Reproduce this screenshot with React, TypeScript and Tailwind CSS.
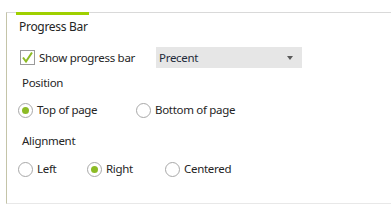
import React, { useState } from "react";

function Radio({ checked, label, onClick }: { checked: boolean; label: string; onClick: () => void }) {
  return (
    <button onClick={onClick} className="flex items-center gap-[4px] text-left">
      <span className="flex h-[15px] w-[15px] items-center justify-center rounded-full border border-[#a8a8a8] bg-white">
        {checked ? <span className="h-[7px] w-[7px] rounded-full bg-[#8cbb25]" /> : null}
      </span>
      <span>{label}</span>
    </button>
  );
}

export default function App() {
  const [show, setShow] = useState(true);
  const [position, setPosition] = useState("top");
  const [align, setAlign] = useState("right");

  return (
    <div
      className="h-[214px] w-[391px] bg-white pt-[12px] pl-[6px] text-[11.5px] leading-[16px] tracking-[-0.3px] text-[#252525]"
      style={{ fontFamily: '"Segoe UI", "Noto Sans", sans-serif' }}
    >
      <div className="relative h-[192px] border-t border-l border-b border-t-[#d9d9d9] border-l-[#c4c4a8] border-b-[#e8e8e8]">
        <div className="absolute left-[9px] top-[-1px] h-[3px] w-[73px] bg-[#9fd000]" />
        <div className="pl-[12px] pt-[6px] text-[12px]">Progress Bar</div>

        <div className="mt-[12px] flex items-center pl-[13px]">
          <button onClick={() => setShow(!show)} className="flex w-[136px] items-center gap-[4px]">
            <span className="flex h-[15px] w-[15px] items-center justify-center border border-[#9a9a9a] bg-white">
              {show ? (
                <svg width="13" height="13" viewBox="0 0 13 13">
                  <path d="M2 6.5 L5 10.5 L11 1.5" fill="none" stroke="#8cbb25" strokeWidth="2" />
                </svg>
              ) : null}
            </span>
            <span>Show progress bar</span>
          </button>
          <div className="flex h-[21px] w-[146px] items-center justify-between bg-[#e6e6e6] pl-[3px] pr-[9px] text-[#1e2a3a]">
            <span>Precent</span>
            <svg width="6" height="4" viewBox="0 0 6 4">
              <path d="M0 0 H6 L3 4 Z" fill="#5a5a5a" />
            </svg>
          </div>
        </div>

        <div className="mt-[7px] pl-[15px]">Position</div>
        <div className="mt-[11px] flex items-center pl-[11px]">
          <div className="w-[118px]">
            <Radio checked={position === "top"} label="Top of page" onClick={() => setPosition("top")} />
          </div>
          <Radio checked={position === "bottom"} label="Bottom of page" onClick={() => setPosition("bottom")} />
        </div>

        <div className="mt-[15px] pl-[15px]">Alignment</div>
        <div className="mt-[12px] flex items-center pl-[11px]">
          <div className="w-[69px]">
            <Radio checked={align === "left"} label="Left" onClick={() => setAlign("left")} />
          </div>
          <div className="w-[78px]">
            <Radio checked={align === "right"} label="Right" onClick={() => setAlign("right")} />
          </div>
          <Radio checked={align === "centered"} label="Centered" onClick={() => setAlign("centered")} />
        </div>
      </div>
    </div>
  );
}
